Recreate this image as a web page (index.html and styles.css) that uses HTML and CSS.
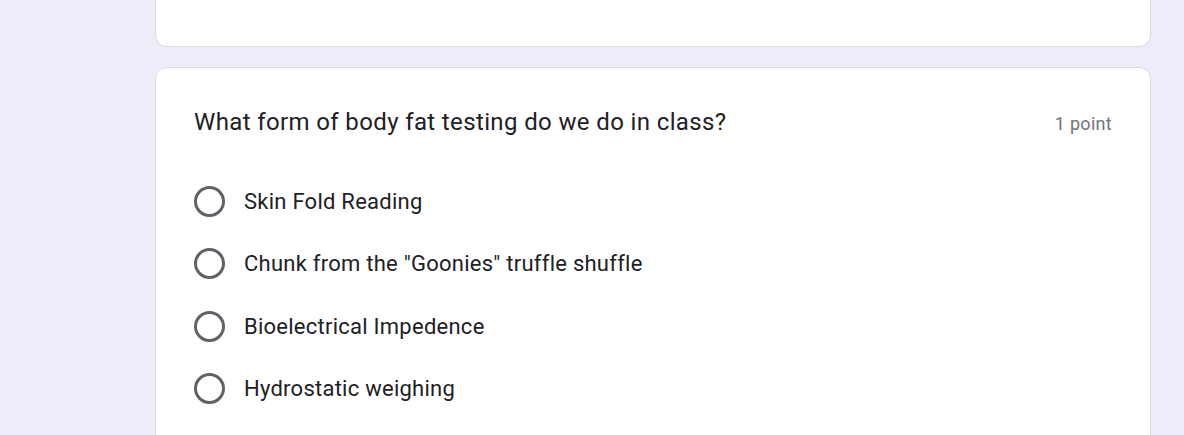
FILE: index.html
```html
<!DOCTYPE html>
<html>
<head>
<meta charset="utf-8">
<link rel="stylesheet" href="styles.css">
</head>
<body>
<div class="page">
  <div class="card card-top"></div>
  <div class="card card-question">
    <div class="q-head">
      <div class="q-title">What form of body fat testing do we do in class?</div>
      <div class="q-points">1 point</div>
    </div>
    <div class="options">
      <label class="option"><span class="radio"></span><span class="opt-text">Skin Fold Reading</span></label>
      <label class="option"><span class="radio"></span><span class="opt-text">Chunk from the "Goonies" truffle shuffle</span></label>
      <label class="option"><span class="radio"></span><span class="opt-text">Bioelectrical Impedence</span></label>
      <label class="option"><span class="radio"></span><span class="opt-text">Hydrostatic weighing</span></label>
    </div>
  </div>
</div>
</body>
</html>
```

FILE: styles.css
```css
html, body {
  margin: 0;
  padding: 0;
  background: #f0ebf8;
  font-family: Roboto, "Liberation Sans", Arial, sans-serif;
  color: #202124;
  overflow: hidden;
}
.page {
  margin-left: 155px;
  width: 996px;
}
.card {
  background: #fff;
  border: 1px solid #dadce0;
  border-radius: 12px;
  box-sizing: border-box;
}
.card-top {
  height: 47px;
  border-top: none;
  border-radius: 0 0 12px 12px;
}
.card-question {
  margin-top: 20px;
  padding: 36px 38px 40px 38px;
  height: 400px;
}
.q-head {
  display: flex;
  justify-content: space-between;
  align-items: baseline;
}
.q-title {
  font-size: 24px;
  line-height: 36px;
  letter-spacing: 0.37px;
}
.q-points {
  font-size: 18px;
  letter-spacing: 0.3px;
  color: #70757a;
}
.options {
  margin-top: 46px;
  display: flex;
  flex-direction: column;
  gap: 31.4px;
}
.option {
  display: flex;
  align-items: center;
  gap: 19px;
  height: 31px;
}
.radio {
  width: 31px;
  height: 31px;
  box-sizing: border-box;
  border: 3px solid #5f6368;
  border-radius: 50%;
  flex: none;
}
.opt-text {
  font-size: 22px;
  line-height: 31px;
  letter-spacing: 0.25px;
}
```
